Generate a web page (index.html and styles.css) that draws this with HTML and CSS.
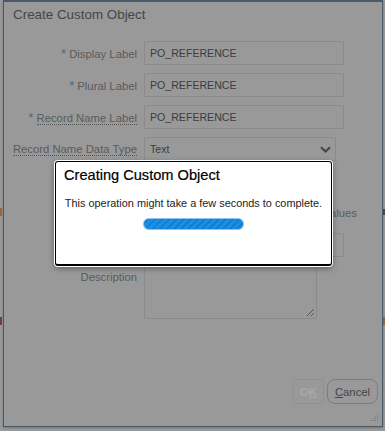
FILE: index.html
```html
<!DOCTYPE html>
<html lang="en">
<head>
    <meta charset="UTF-8">
    <meta name="viewport" content="width=device-width, initial-scale=1.0">
    <title>Create Custom Object</title>
    <link rel="stylesheet" href="styles.css">
</head>
<body>
    <div class="page">
        <div class="peek peek-left-a"></div>
        <div class="peek peek-left-b"></div>
        <div class="peek peek-right-a"></div>
        <div class="peek peek-right-b"></div>

        <div class="dialog">
            <div class="dialog-title">Create Custom Object</div>

            <div class="form">
                <div class="row">
                    <label class="label"><span class="req">*</span> Display Label</label>
                    <div class="field">PO_REFERENCE</div>
                </div>
                <div class="row">
                    <label class="label"><span class="req">*</span> Plural Label</label>
                    <div class="field">PO_REFERENCE</div>
                </div>
                <div class="row">
                    <label class="label"><span class="req">*</span> <span class="dotted">Record Name Label</span></label>
                    <div class="field">PO_REFERENCE</div>
                </div>
                <div class="row">
                    <label class="label"><span class="dotted">Record Name Data Type</span></label>
                    <div class="field select">
                        Text
                        <svg class="chevron" width="11" height="7" viewBox="0 0 11 7">
                            <path d="M1 1.2 L5.5 5.5 L10 1.2" fill="none" stroke="#454545" stroke-width="2"/>
                        </svg>
                    </div>
                </div>
                <div class="row"></div>
                <div class="row">
                    <div class="check-text">Values</div>
                </div>
                <div class="row">
                    <label class="label"></label>
                    <div class="field"></div>
                </div>
                <div class="row">
                    <label class="label label-top">Description</label>
                    <div class="field area">
                        <svg class="grip" width="9" height="9" viewBox="0 0 9 9">
                            <path d="M1 8 L8 1 M5 8 L8 5" stroke="#555" stroke-width="1"/>
                        </svg>
                    </div>
                </div>
            </div>

            <div class="buttons">
                <button class="btn btn-disabled">O<u>K</u></button>
                <button class="btn btn-cancel"><u>C</u>ancel</button>
            </div>
            <svg class="resize" width="9" height="9" viewBox="0 0 9 9">
                <rect x="7" y="1" width="1" height="1" fill="#777"/>
                <rect x="5" y="3" width="1" height="1" fill="#777"/>
                <rect x="7" y="3" width="1" height="1" fill="#777"/>
                <rect x="3" y="5" width="1" height="1" fill="#777"/>
                <rect x="5" y="5" width="1" height="1" fill="#777"/>
                <rect x="7" y="5" width="1" height="1" fill="#777"/>
                <rect x="1" y="7" width="1" height="1" fill="#777"/>
                <rect x="3" y="7" width="1" height="1" fill="#777"/>
                <rect x="5" y="7" width="1" height="1" fill="#777"/>
                <rect x="7" y="7" width="1" height="1" fill="#777"/>
            </svg>
        </div>

        <div class="busy">
            <div class="busy-title">Creating Custom Object</div>
            <div class="busy-text">This operation might take a few seconds to complete.</div>
            <div class="progress"></div>
        </div>
    </div>
</body>
</html>
```

FILE: styles.css
```css
body {
    margin: 0;
    padding: 0;
    background-color: #999999;
    font-family: "Liberation Sans", Arial, sans-serif;
}

.page {
    position: relative;
    width: 385px;
    height: 431px;
    overflow: hidden;
}

/* bits of the page behind the dialog */
.peek {
    position: absolute;
    width: 2px;
    height: 8px;
}

.peek-left-a { left: 0; top: 208px; background-color: #a0643c; }
.peek-left-b { left: 0; top: 317px; background-color: #7a3a3a; }
.peek-right-a { left: 383px; top: 209px; width: 2px; height: 6px; background-color: #54465e; }
.peek-right-b { left: 383px; top: 317px; background-color: #a0643c; }

.dialog {
    position: relative;
    box-sizing: border-box;
    margin-left: 3px;
    width: 380px;
    height: 427px;
    background-color: #999999;
    border: 1px solid #4a5968;
    border-top-width: 2px;
    box-shadow: 0 1px 2px rgba(0, 0, 0, 0.25);
}

.dialog-title {
    padding: 5px 0 0 9px;
    height: 20px;
    font-size: 13.4px;
    line-height: 16px;
    color: #454545;
}

.form {
    margin-top: 14px;
    display: flex;
    flex-direction: column;
    gap: 8px;
}

.row {
    display: flex;
    align-items: center;
    gap: 7px;
    height: 24px;
}

.label {
    width: 133px;
    text-align: right;
    font-size: 11.3px;
    color: #5b5b5b;
}

.label-top {
    align-self: flex-start;
    padding-top: 6px;
}

.req {
    color: #3d6d8d;
    font-size: 13px;
}

.dotted {
    border-bottom: 1px dotted #555;
}

.field {
    box-sizing: border-box;
    width: 200px;
    height: 24px;
    padding: 0 5px;
    border: 1px solid #8b8b8b;
    border-radius: 1px;
    font-size: 10.6px;
    line-height: 22px;
    color: #3c3c3c;
}

.select {
    position: relative;
    width: 192px;
}

.chevron {
    position: absolute;
    right: 4px;
    top: 8px;
}

.area {
    position: relative;
    width: 173px;
    height: 54px;
    align-self: flex-start;
}

.grip {
    position: absolute;
    right: 1px;
    bottom: 1px;
}

.check-text {
    width: 353px;
    text-align: right;
    font-size: 11.3px;
    color: #5b5b5b;
}

.buttons {
    display: flex;
    justify-content: flex-end;
    gap: 3px;
    margin-top: 90px;
    padding-right: 4px;
}

.btn {
    height: 25px;
    padding: 0;
    font-family: "Liberation Sans", Arial, sans-serif;
    font-size: 11.3px;
    background-color: #999999;
    cursor: pointer;
}

.btn-disabled {
    width: 31px;
    color: #a9a9a9;
    font-weight: bold;
    border: 1px solid #919191;
    border-radius: 2px;
}

.btn-cancel {
    width: 51px;
    color: #454545;
    border: 1px solid #6f7f8c;
    border-radius: 8px;
}

.resize {
    position: absolute;
    right: 3px;
    bottom: 4px;
}

/* busy popup over the dimmed dialog */
.busy {
    position: absolute;
    left: 55px;
    top: 161px;
    box-sizing: border-box;
    width: 277px;
    height: 105px;
    background-color: #fff;
    border: 1px solid #000;
    border-bottom-width: 2px;
    border-radius: 3px;
    box-shadow: 0 0 0 1px #fff, 0 2px 6px rgba(0, 0, 0, 0.45);
}

.busy-title {
    padding: 5px 0 0 8px;
    font-size: 14.6px;
    line-height: 16px;
    color: #000;
    -webkit-text-stroke: 0.2px #000;
}

.busy-text {
    margin-top: 13px;
    text-align: center;
    font-size: 10.9px;
    line-height: 14px;
    color: #1c1c1c;
}

.progress {
    box-sizing: border-box;
    width: 101px;
    height: 12px;
    margin: 8px auto 0;
    border: 1px solid #8cc4ee;
    border-radius: 6px;
    background-color: #1a8ee2;
    background-image: repeating-linear-gradient(-45deg, #1a8ee2 0, #1a8ee2 3px, #137ed0 3px, #137ed0 5px);
}
```
